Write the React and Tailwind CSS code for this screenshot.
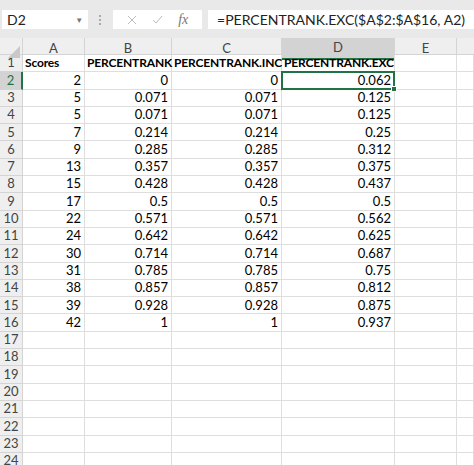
import React from 'react';

const rows = [
    ['2', '0', '0', '0.062'],
    ['5', '0.071', '0.071', '0.125'],
    ['5', '0.071', '0.071', '0.125'],
    ['7', '0.214', '0.214', '0.25'],
    ['9', '0.285', '0.285', '0.312'],
    ['13', '0.357', '0.357', '0.375'],
    ['15', '0.428', '0.428', '0.437'],
    ['17', '0.5', '0.5', '0.5'],
    ['22', '0.571', '0.571', '0.562'],
    ['24', '0.642', '0.642', '0.625'],
    ['30', '0.714', '0.714', '0.687'],
    ['31', '0.785', '0.785', '0.75'],
    ['38', '0.857', '0.857', '0.812'],
    ['39', '0.928', '0.928', '0.875'],
    ['42', '1', '1', '0.937']
];

const cols = 'grid grid-cols-[23px_62px_87px_110px_113px_62px_1fr]';
const cell = 'h-[17.3px] border-r border-b border-[#dedede] px-[3px] flex items-center justify-end whitespace-nowrap';
const headCell = 'h-[17.3px] border-r border-b border-[#dedede] pl-[2px] flex items-center whitespace-nowrap font-bold text-[12px] tracking-[-0.15px]';
const rowHead = 'h-[17.3px] border-r border-b border-[#d4d4d4] bg-[#efefef] flex items-center justify-center text-[#444]';

const App = () => {
    const empty = [];
    for (let i = 17; i <= 25; i++) empty.push(i);

    return (
        <div className="w-[474px] h-[465px] overflow-hidden bg-white text-[13px] text-black" style={{ fontFamily: 'Lato, "Open Sans", sans-serif' }}>
            {/* formula bar */}
            <div className="h-[38px] bg-[#e9e9e9] flex items-center pt-[1px]">
                <div className="ml-[2px] w-[93px] h-[19px] bg-white flex items-center justify-between pl-[5px] pr-[3px] text-[14px] text-[#222]">
                    <span>D2</span>
                    <span className="text-[8px] text-[#777] mr-[2px]">▼</span>
                </div>
                <div className="w-[27px] flex flex-col items-center gap-[2px]">
                    <span className="w-[2px] h-[2px] bg-[#aaa]"></span>
                    <span className="w-[2px] h-[2px] bg-[#aaa]"></span>
                    <span className="w-[2px] h-[2px] bg-[#aaa]"></span>
                </div>
                <div className="w-[96px] h-[19px] bg-white flex items-center justify-around px-[6px]">
                    <svg width="10" height="10" viewBox="0 0 10 10"><path d="M1 1L9 9M9 1L1 9" stroke="#bbb" strokeWidth="1" /></svg>
                    <svg width="11" height="10" viewBox="0 0 11 10"><path d="M1 5L4 8L10 1" stroke="#bbb" strokeWidth="1" fill="none" /></svg>
                    <span className="italic text-[#777] text-[14px]" style={{ fontFamily: '"Liberation Serif", serif' }}>fx</span>
                </div>
                <div className="ml-[6px] flex-1 h-[19px] bg-white flex items-center px-[9px] text-[14px] text-[#222] whitespace-nowrap">
                    =PERCENTRANK.EXC($A$2:$A$16, A2)
                </div>
            </div>

            {/* column headers */}
            <div className={cols + ' h-[17px] bg-[#efefef] text-[#444] border-b border-[#d4d4d4]'}>
                <div className="border-r border-[#d4d4d4] relative overflow-hidden">
                    <div className="absolute right-[2px] bottom-[2px] w-0 h-0 border-l-[12px] border-l-transparent border-b-[12px] border-b-[#c8c8c8]"></div>
                </div>
                <div className="border-r border-[#d4d4d4] flex items-center justify-center">A</div>
                <div className="border-r border-[#d4d4d4] flex items-center justify-center">B</div>
                <div className="border-r border-[#d4d4d4] flex items-center justify-center">C</div>
                <div className="bg-[#d3d3d3] border-r border-r-[#d4d4d4] border-b-2 border-b-[#217346] flex items-center justify-center">D</div>
                <div className="border-r border-[#d4d4d4] flex items-center justify-center">E</div>
                <div></div>
            </div>

            {/* row 1 */}
            <div className={cols}>
                <div className={rowHead}>1</div>
                <div className={headCell}>Scores</div>
                <div className={headCell}>PERCENTRANK</div>
                <div className={headCell}>PERCENTRANK.INC</div>
                <div className={headCell}>PERCENTRANK.EXC</div>
                <div className={cell}></div>
                <div className={cell}></div>
            </div>

            {rows.map((r, i) => (
                <div key={i} className={cols}>
                    <div className={i === 0
                        ? 'h-[17.3px] border-b border-[#d4d4d4] border-r-2 border-r-[#217346] bg-[#d3d3d3] flex items-center justify-center text-[#217346]'
                        : rowHead}>{i + 2}</div>
                    <div className={cell}>{r[0]}</div>
                    <div className={cell}>{r[1]}</div>
                    <div className={cell}>{r[2]}</div>
                    {i === 0 ? (
                        <div className="relative border-2 border-[#217346] px-[2px] flex items-center justify-end mt-[-1px] ml-[-1px] h-[18.3px]">
                            {r[3]}
                            <div className="absolute right-[-4px] bottom-[-4px] w-[6px] h-[6px] bg-[#217346] border border-white"></div>
                        </div>
                    ) : (
                        <div className={cell}>{r[3]}</div>
                    )}
                    <div className={cell}></div>
                    <div className={cell}></div>
                </div>
            ))}

            {empty.map((n) => (
                <div key={n} className={cols}>
                    <div className={rowHead}>{n}</div>
                    <div className={cell}></div>
                    <div className={cell}></div>
                    <div className={cell}></div>
                    <div className={cell}></div>
                    <div className={cell}></div>
                    <div className={cell}></div>
                </div>
            ))}
        </div>
    );
};

export default App;
